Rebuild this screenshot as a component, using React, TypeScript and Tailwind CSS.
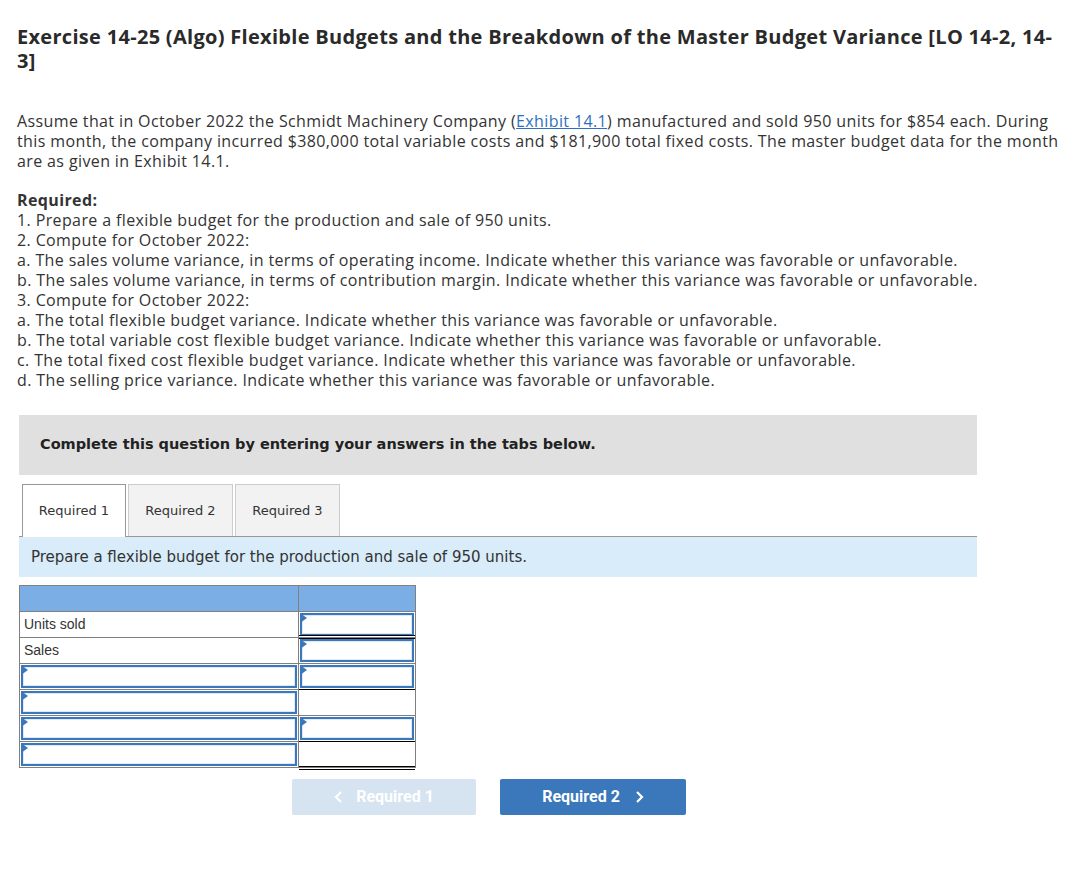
import React from "react";

const bodyFont = { fontFamily: '"Open Sans", "Lato", sans-serif' };

function Tri() {
  return (
    <span className="absolute left-[1px] top-[1px] w-0 h-0 border-t-[5px] border-b-[5px] border-l-[7px] border-t-transparent border-b-transparent border-l-[#3a77bb]" />
  );
}

function InputCell({ bottom }: { bottom?: "single" | "double" | "none" }) {
  return (
    <div className="relative h-full w-full p-[1px]">
      <div className="h-full w-full border-2 border-[#3a77bb]">
        <div className="h-full w-full border border-[#dde9f6] bg-white" />
      </div>
      <Tri />
      {bottom === "double" && (
        <div className="absolute left-0 right-0 bottom-[-2px] h-[4px] border-t border-b border-black" />
      )}
      {bottom === "single" && (
        <div className="absolute left-0 right-0 bottom-[-1px] h-[1px] bg-black" />
      )}
    </div>
  );
}

export default function App() {
  return (
    <div className="bg-white min-h-[873px] w-[1083px] text-[#333]" style={bodyFont}>
      <div className="pl-[17px] pt-[25px]">
        <h1 className="text-[20px] font-bold leading-[24px] tracking-[0.3px] text-[#2a2a2a] whitespace-nowrap">
          <div>Exercise 14-25 (Algo) Flexible Budgets and the Breakdown of the Master Budget Variance [LO 14-2, 14-</div>
          <div>3]</div>
        </h1>

        <div className="mt-[38px] text-[16px] leading-[20px] tracking-[0.38px] whitespace-nowrap">
          <div>
            Assume that in October 2022 the Schmidt Machinery Company (
            <span className="text-[#2f6fbe] underline">Exhibit 14.1</span>) manufactured and sold 950 units for $854 each. During
          </div>
          <div>this month, the company incurred $380,000 total variable costs and $181,900 total fixed costs. The master budget data for the month</div>
          <div>are as given in Exhibit 14.1.</div>
        </div>

        <div className="mt-[19px] text-[16px] leading-[20px] tracking-[0.38px] whitespace-nowrap">
          <div className="font-bold">Required:</div>
          <div>1. Prepare a flexible budget for the production and sale of 950 units.</div>
          <div>2. Compute for October 2022:</div>
          <div>a. The sales volume variance, in terms of operating income. Indicate whether this variance was favorable or unfavorable.</div>
          <div>b. The sales volume variance, in terms of contribution margin. Indicate whether this variance was favorable or unfavorable.</div>
          <div>3. Compute for October 2022:</div>
          <div>a. The total flexible budget variance. Indicate whether this variance was favorable or unfavorable.</div>
          <div>b. The total variable cost flexible budget variance. Indicate whether this variance was favorable or unfavorable.</div>
          <div>c. The total fixed cost flexible budget variance. Indicate whether this variance was favorable or unfavorable.</div>
          <div>d. The selling price variance. Indicate whether this variance was favorable or unfavorable.</div>
        </div>
      </div>

      <div className="ml-[19px] mt-[25px] w-[958px]" style={{ fontFamily: '"DejaVu Sans", Verdana, sans-serif' }}>
        <div className="h-[60px] bg-[#e0e0e0] flex items-center pl-[21px] text-[14.5px] font-bold text-[#222]">
          Complete this question by entering your answers in the tabs below.
        </div>

        <div className="mt-[9px] flex items-end pl-[3px] border-b border-[#999] h-[53px]">
          <div className="h-[53px] w-[104px] border border-[#999] border-b-0 bg-white flex items-center justify-center text-[13px] text-[#333] mb-[-1px] relative">
            Required 1
          </div>
          <div className="ml-[2px] h-[52px] w-[105px] border border-[#ccc] border-b-0 bg-[#f2f2f2] flex items-center justify-center text-[13px] text-[#333]">
            Required 2
          </div>
          <div className="ml-[2px] h-[52px] w-[105px] border border-[#ccc] border-b-0 bg-[#f2f2f2] flex items-center justify-center text-[13px] text-[#333]">
            Required 3
          </div>
        </div>

        <div className="h-[40px] bg-[#d9ecfa] flex items-center pl-[12px] text-[15px] text-[#333]">
          Prepare a flexible budget for the production and sale of 950 units.
        </div>

        <div className="mt-[8px] w-[397px] border border-[#808080]" style={{ fontFamily: '"Liberation Sans", Arial, sans-serif' }}>
          <div className="flex h-[26px] bg-[#7aaee5] border-b border-[#808080]">
            <div className="w-[279px] border-r border-[#808080]" />
            <div className="flex-1" />
          </div>
          <div className="flex h-[26px] border-b border-[#808080]">
            <div className="w-[279px] border-r border-[#808080] flex items-center pl-[4px] text-[14px] text-[#333]">Units sold</div>
            <div className="flex-1"><InputCell bottom="double" /></div>
          </div>
          <div className="flex h-[26px] border-b border-[#808080]">
            <div className="w-[279px] border-r border-[#808080] flex items-center pl-[4px] text-[14px] text-[#333]">Sales</div>
            <div className="flex-1"><InputCell /></div>
          </div>
          <div className="flex h-[26px] border-b border-[#808080]">
            <div className="w-[279px] border-r border-[#808080]"><InputCell /></div>
            <div className="flex-1"><InputCell bottom="single" /></div>
          </div>
          <div className="flex h-[26px] border-b border-[#808080]">
            <div className="w-[279px] border-r border-[#808080]"><InputCell /></div>
            <div className="flex-1 relative"></div>
          </div>
          <div className="flex h-[26px] border-b border-[#808080]">
            <div className="w-[279px] border-r border-[#808080]"><InputCell /></div>
            <div className="flex-1"><InputCell bottom="single" /></div>
          </div>
          <div className="flex h-[25px]">
            <div className="w-[279px] border-r border-[#808080]"><InputCell /></div>
            <div className="flex-1 relative">
              <div className="absolute left-0 right-0 bottom-[-3px] h-[4px] border-t border-b border-black" />
            </div>
          </div>
        </div>

        <div className="mt-[11px] flex pl-[273px] gap-[24px]" style={{ fontFamily: 'Roboto, "Liberation Sans", Arial, sans-serif' }}>
          <div className="w-[184px] h-[36px] rounded-[2px] bg-[#d6e3f1] text-white font-bold text-[16px] flex items-center justify-center gap-[12px]">
            <svg width="10" height="14" viewBox="0 0 10 14"><path d="M7 2 L2 7 L7 12" stroke="white" strokeWidth="2.2" fill="none" /></svg>
            <span>Required 1</span>
          </div>
          <div className="w-[186px] h-[36px] rounded-[2px] bg-[#3a77bb] text-white font-bold text-[16px] flex items-center justify-center gap-[14px]">
            <span>Required 2</span>
            <svg width="10" height="14" viewBox="0 0 10 14"><path d="M3 2 L8 7 L3 12" stroke="white" strokeWidth="2.2" fill="none" /></svg>
          </div>
        </div>
      </div>
    </div>
  );
}
